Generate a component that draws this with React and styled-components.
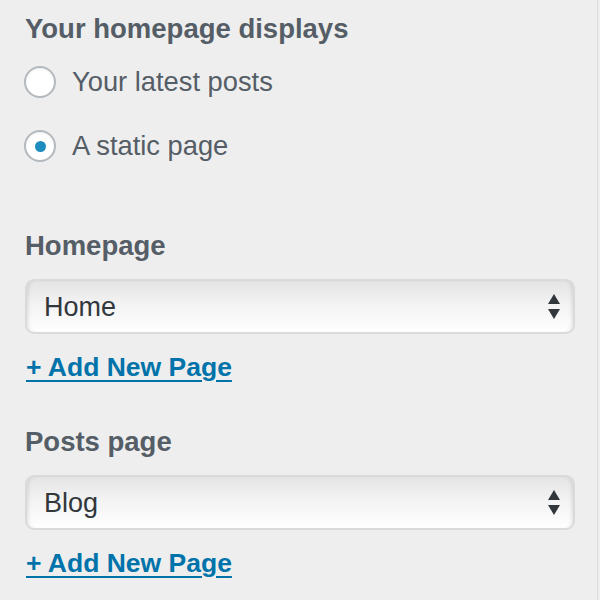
import React, { useState } from 'react';
import styled, { createGlobalStyle } from 'styled-components';

const GlobalStyle = createGlobalStyle`
  html, body {
    margin: 0;
    padding: 0;
    background: #eeeeee;
  }
  body {
    font-family: "Liberation Sans", Arial, sans-serif;
  }
`;

const pages = ['Home', 'Blog', 'About', 'Contact'];

const App = () => {
  const [display, setDisplay] = useState('page');
  const [homepage, setHomepage] = useState('Home');
  const [postsPage, setPostsPage] = useState('Blog');

  return (
    <>
      <GlobalStyle />
      <Panel>
        <Section>
          <ControlTitle>Your homepage displays</ControlTitle>
          <RadioList>
            <RadioRow onClick={() => setDisplay('posts')}>
              <Radio checked={display === 'posts'} />
              <RadioLabel>Your latest posts</RadioLabel>
            </RadioRow>
            <RadioRow onClick={() => setDisplay('page')}>
              <Radio checked={display === 'page'} />
              <RadioLabel>A static page</RadioLabel>
            </RadioRow>
          </RadioList>
        </Section>

        <PageSection>
          <ControlTitle>Homepage</ControlTitle>
          <SelectWrap>
            <Select value={homepage} onChange={e => setHomepage(e.target.value)}>
              {pages.map(p => <option key={p}>{p}</option>)}
            </Select>
            <Arrows />
          </SelectWrap>
          <AddLink href="#">+ Add New Page</AddLink>
        </PageSection>

        <PageSection>
          <ControlTitle>Posts page</ControlTitle>
          <SelectWrap>
            <Select value={postsPage} onChange={e => setPostsPage(e.target.value)}>
              {pages.map(p => <option key={p}>{p}</option>)}
            </Select>
            <Arrows />
          </SelectWrap>
          <AddLink href="#">+ Add New Page</AddLink>
        </PageSection>
      </Panel>
    </>
  );
};

const Arrows = () => (
  <ArrowIcon width="14" height="28" viewBox="0 0 14 28">
    <path d="M7 1 L13 11 L1 11 Z" fill="#32373c" />
    <path d="M1 16 L13 16 L7 26 Z" fill="#32373c" />
  </ArrowIcon>
);

// Styles
const Panel = styled.div`
  width: 598px;
  min-height: 600px;
  box-sizing: border-box;
  padding: 13px 0 0 25px;
  border-right: 1px solid #dcdcdc;
  display: flex;
  flex-direction: column;
`;

const Section = styled.div`
  display: flex;
  flex-direction: column;
`;

const PageSection = styled.div`
  display: flex;
  flex-direction: column;
  margin-top: 68px;

  & + & {
    margin-top: 43px;
  }
`;

const ControlTitle = styled.div`
  font-size: 27.5px;
  line-height: 32px;
  font-weight: bold;
  color: #555d66;
`;

const RadioList = styled.div`
  display: flex;
  flex-direction: column;
  gap: 32px;
  margin-top: 21px;
`;

const RadioRow = styled.label`
  display: flex;
  align-items: center;
  height: 32px;
  cursor: pointer;
`;

const Radio = styled.span`
  width: 32px;
  height: 32px;
  box-sizing: border-box;
  border-radius: 50%;
  border: 2px solid #b4b9be;
  background: #fff;
  box-shadow: inset 0 1px 2px rgba(0, 0, 0, 0.07);
  margin-left: -1px;
  display: flex;
  align-items: center;
  justify-content: center;

  &::after {
    content: '';
    display: ${props => props.checked ? 'block' : 'none'};
    width: 11px;
    height: 11px;
    border-radius: 50%;
    background: #1e8cbe;
  }
`;

const RadioLabel = styled.span`
  margin-left: 16px;
  font-size: 27.3px;
  color: #555d66;
`;

const SelectWrap = styled.div`
  position: relative;
  margin-top: 17px;
  width: 550px;
  height: 55px;
`;

const Select = styled.select`
  appearance: none;
  width: 100%;
  height: 100%;
  box-sizing: border-box;
  margin: 0;
  padding: 0 50px 0 17px;
  border: 2px solid #dadada;
  border-radius: 9px;
  background: linear-gradient(to bottom, #e4e4e4 0%, #f3f3f3 45%, #ffffff 100%);
  box-shadow: inset 4px 0 4px -3px rgba(0, 0, 0, 0.12), inset -4px 0 4px -3px rgba(0, 0, 0, 0.12);
  font-family: "Liberation Sans", Arial, sans-serif;
  font-size: 27px;
  color: #32373c;
  outline: none;
`;

const ArrowIcon = styled.svg`
  position: absolute;
  right: 14px;
  top: 14px;
  pointer-events: none;
`;

const AddLink = styled.a`
  margin-top: 17px;
  align-self: flex-start;
  font-size: 26.5px;
  line-height: 32px;
  font-weight: bold;
  color: #0073aa;
  text-decoration: underline;
  text-underline-offset: 4px;
  margin-left: 1px;
`;

export default App;
